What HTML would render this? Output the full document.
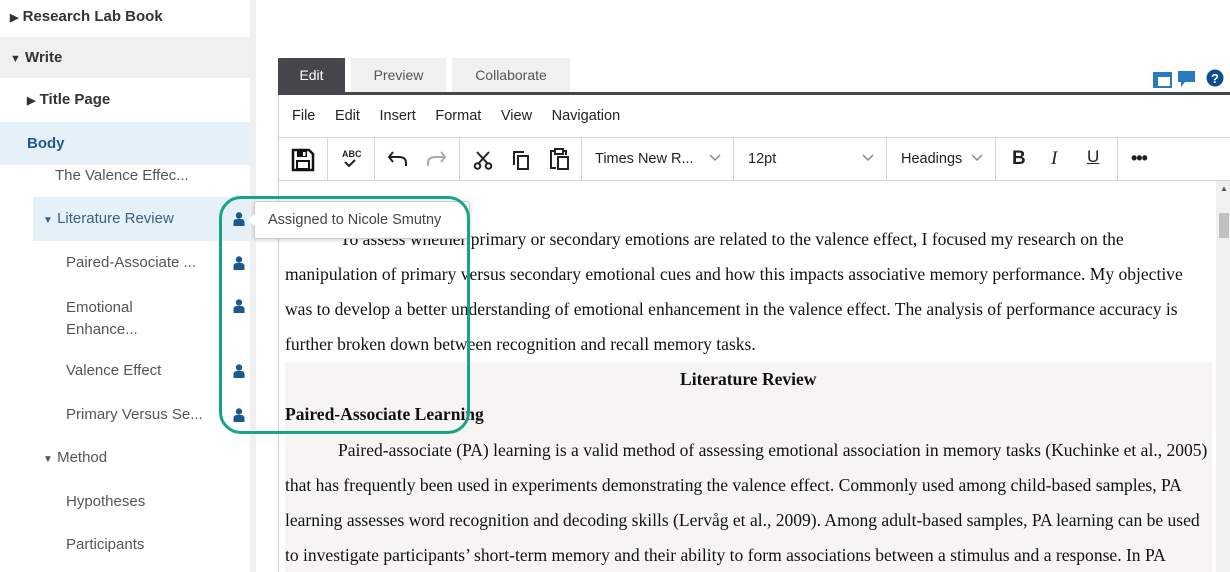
<!DOCTYPE html>
<html><head><meta charset="utf-8"><style>
*{margin:0;padding:0;box-sizing:border-box}
body{width:1230px;height:572px;overflow:hidden;background:#fff;font-family:"Liberation Sans",sans-serif;position:relative}
.a{position:absolute;white-space:nowrap}
.side{position:absolute;left:0;top:0;width:250px;height:572px;background:#fff}
.gut{position:absolute;left:250px;top:0;width:6px;height:572px;background:#efefef}
.nav{color:#555;font-size:15px}
.b{font-weight:bold;color:#333;font-size:15px}
.ser{font-family:"Liberation Serif",serif;font-size:17.55px;color:#111;position:absolute;white-space:nowrap}
.tb{position:absolute;top:138px;height:43px;border-left:1px solid #d6d6d6}
</style></head><body>
<div class="side"></div>
<div class="gut"></div>
<div class="a" style="left:0;top:37px;width:250px;height:41px;background:#f0f0f0"></div>
<div class="a" style="left:0;top:122px;width:250px;height:43px;background:#e6f0f9"></div>
<div class="a" style="left:33px;top:197px;width:217px;height:44px;background:#e6f0f9"></div>

<div class="a b" style="left:10px;top:8px"><span style="font-size:11px">&#9654;</span> Research Lab Book</div>
<div class="a b" style="left:10px;top:49px"><span style="font-size:11px">&#9660;</span> Write</div>
<div class="a b" style="left:27px;top:91px"><span style="font-size:11px">&#9654;</span> Title Page</div>
<div class="a" style="left:27px;top:135px;font-weight:bold;color:#1c5a8e;font-size:15px">Body</div>
<div class="a nav" style="left:55px;top:167px">The Valence Effec...</div>
<div class="a nav" style="left:43px;top:210px;color:#3d5f80"><span style="font-size:10px">&#9660;</span> Literature Review</div>
<div class="a nav" style="left:66px;top:254px">Paired-Associate ...</div>
<div class="a nav" style="left:66px;top:297px;line-height:22px">Emotional<br>Enhance...</div>
<div class="a nav" style="left:66px;top:362px">Valence Effect</div>
<div class="a nav" style="left:66px;top:406px">Primary Versus Se...</div>
<div class="a nav" style="left:43px;top:449px"><span style="font-size:10px">&#9660;</span> Method</div>
<div class="a nav" style="left:66px;top:493px">Hypotheses</div>
<div class="a nav" style="left:66px;top:536px">Participants</div>

<svg class="a" style="left:233px;top:212px" width="12" height="14" viewBox="0 0 12 14"><circle cx="6" cy="3.5" r="3.2" fill="#1c5a8e"/><path d="M0.5 14 V10 Q0.5 7 4 7 H8 Q11.5 7 11.5 10 V14Z" fill="#1c5a8e"/></svg>
<svg class="a" style="left:233px;top:256px" width="12" height="14" viewBox="0 0 12 14"><circle cx="6" cy="3.5" r="3.2" fill="#1c5a8e"/><path d="M0.5 14 V10 Q0.5 7 4 7 H8 Q11.5 7 11.5 10 V14Z" fill="#1c5a8e"/></svg>
<svg class="a" style="left:233px;top:299px" width="12" height="14" viewBox="0 0 12 14"><circle cx="6" cy="3.5" r="3.2" fill="#1c5a8e"/><path d="M0.5 14 V10 Q0.5 7 4 7 H8 Q11.5 7 11.5 10 V14Z" fill="#1c5a8e"/></svg>
<svg class="a" style="left:233px;top:364px" width="12" height="14" viewBox="0 0 12 14"><circle cx="6" cy="3.5" r="3.2" fill="#1c5a8e"/><path d="M0.5 14 V10 Q0.5 7 4 7 H8 Q11.5 7 11.5 10 V14Z" fill="#1c5a8e"/></svg>
<svg class="a" style="left:233px;top:408px" width="12" height="14" viewBox="0 0 12 14"><circle cx="6" cy="3.5" r="3.2" fill="#1c5a8e"/><path d="M0.5 14 V10 Q0.5 7 4 7 H8 Q11.5 7 11.5 10 V14Z" fill="#1c5a8e"/></svg>

<!-- tabs -->
<div class="a" style="left:278px;top:58px;width:67px;height:35px;background:#45474c;color:#fff;font-size:14px;text-align:center;line-height:34px">Edit</div>
<div class="a" style="left:351px;top:58px;width:95px;height:35px;background:#f0f0f0;color:#555;font-size:14px;text-align:center;line-height:34px">Preview</div>
<div class="a" style="left:452px;top:58px;width:118px;height:35px;background:#f0f0f0;color:#555;font-size:14px;text-align:center;line-height:34px">Collaborate</div>
<div class="a" style="left:278px;top:92px;width:952px;height:3px;background:#45474c"></div>
<svg class="a" style="left:1153px;top:72px" width="20" height="16"><rect x="1" y="1" width="17" height="14" fill="none" stroke="#2a7ac0" stroke-width="2"/><rect x="1" y="1" width="17" height="4" fill="#2a7ac0"/><rect x="1" y="5" width="4" height="10" fill="#2a7ac0"/></svg>
<svg class="a" style="left:1177px;top:70px" width="20" height="18"><path d="M1 1H18V12H8L4 17V12H1Z" fill="#2a7ac0"/></svg>
<svg class="a" style="left:1206px;top:69px" width="18" height="18"><circle cx="9" cy="9" r="8.5" fill="#0d4f8b"/><text x="9" y="14" text-anchor="middle" font-size="13" font-weight="bold" fill="#fff" font-family="Liberation Sans">?</text></svg>

<!-- editor frame -->
<div class="a" style="left:278px;top:95px;width:1px;height:477px;background:#cfcfcf"></div>
<div class="a" style="left:292px;top:108px;font-size:14.5px;color:#222;word-spacing:2.5px">File&nbsp;&nbsp; Edit&nbsp;&nbsp; Insert&nbsp;&nbsp; Format&nbsp;&nbsp; View&nbsp;&nbsp; Navigation</div>
<div class="a" style="left:278px;top:137px;width:952px;height:1px;background:#d6d6d6"></div>
<div class="a" style="left:278px;top:180px;width:952px;height:1px;background:#d6d6d6"></div>
<div class="tb" style="left:327px"></div><div class="tb" style="left:374px"></div><div class="tb" style="left:459px"></div><div class="tb" style="left:581px"></div><div class="tb" style="left:733px"></div><div class="tb" style="left:886px"></div><div class="tb" style="left:995px"></div><div class="tb" style="left:1117px"></div>
<svg class="a" style="left:291px;top:148px" width="24" height="24" viewBox="0 0 24 24"><path d="M2 2H18L22 6V22H2Z" fill="none" stroke="#111" stroke-width="2.5"/><rect x="6" y="3" width="10" height="6" fill="#111"/><rect x="12" y="4" width="2.5" height="4" fill="#fff"/><rect x="6" y="13" width="12" height="8" fill="none" stroke="#111" stroke-width="2"/></svg>
<div class="a" style="left:342px;top:149px;font-size:9px;font-weight:bold;color:#222">ABC</div>
<svg class="a" style="left:343px;top:159px" width="14" height="9"><path d="M2 3L6 7L12 1" fill="none" stroke="#222" stroke-width="2"/></svg>
<svg class="a" style="left:387px;top:149px" width="22" height="20"><path d="M6 3L2 8L6 13M2 8H12Q19 8 19 14V17" fill="none" stroke="#222" stroke-width="2"/></svg>
<svg class="a" style="left:426px;top:149px" width="22" height="20"><path d="M15 3L19 8L15 13M19 8H9Q2 8 2 14V17" fill="none" stroke="#aaa" stroke-width="2"/></svg>
<svg class="a" style="left:473px;top:150px" width="20" height="20"><path d="M4 2L15 14M16 2L5 14" stroke="#222" stroke-width="2"/><circle cx="4.5" cy="16" r="2.8" fill="none" stroke="#222" stroke-width="2"/><circle cx="15.5" cy="16" r="2.8" fill="none" stroke="#222" stroke-width="2"/></svg>
<svg class="a" style="left:511px;top:149px" width="20" height="22"><path d="M3 16V3H13" fill="none" stroke="#222" stroke-width="2"/><rect x="7" y="7" width="10" height="13" fill="none" stroke="#222" stroke-width="2"/></svg>
<svg class="a" style="left:548px;top:147px" width="22" height="24"><path d="M7 4H3V21H8M15 4H18V8" fill="none" stroke="#222" stroke-width="2"/><rect x="7" y="2" width="8" height="5" fill="none" stroke="#222" stroke-width="2"/><rect x="10" y="10" width="10" height="12" fill="none" stroke="#222" stroke-width="2"/></svg>
<div class="a" style="left:595px;top:151px;font-size:14.5px;color:#222">Times New R...</div>
<div class="a" style="left:748px;top:151px;font-size:14.5px;color:#222">12pt</div>
<div class="a" style="left:901px;top:151px;font-size:14.5px;color:#222">Headings</div>
<svg class="a" style="left:709px;top:154px" width="12" height="8"><path d="M1 1L6 6L11 1" fill="none" stroke="#888" stroke-width="1.5"/></svg>
<svg class="a" style="left:862px;top:154px" width="12" height="8"><path d="M1 1L6 6L11 1" fill="none" stroke="#888" stroke-width="1.5"/></svg>
<svg class="a" style="left:971px;top:154px" width="12" height="8"><path d="M1 1L6 6L11 1" fill="none" stroke="#888" stroke-width="1.5"/></svg>
<div class="a" style="left:1012px;top:148px;font-size:19px;font-weight:bold;color:#222">B</div>
<div class="a" style="left:1051px;top:148px;font-size:19px;font-style:italic;font-family:'Liberation Serif',serif;color:#222">I</div>
<div class="a" style="left:1087px;top:147px;font-size:17px;color:#222;text-decoration:underline">U</div>
<div class="a" style="left:1131px;top:148px;font-size:18px;font-weight:bold;color:#222;letter-spacing:-1px">•••</div>

<!-- content -->
<div class="a" style="left:285px;top:362px;width:927px;height:210px;background:#f6f5f4"></div>
<div class="a" style="left:1216px;top:181px;width:14px;height:391px;background:#f0f0f0"></div>
<div class="a" style="left:1219px;top:213px;width:10px;height:25px;background:#c1c1c1"></div>
<div class="a" style="left:1220px;top:184px;font-size:8px;color:#555">▲</div>
<div class="ser" style="left:340px;top:229px">To assess whether primary or secondary emotions are related to the valence effect, I focused my research on the</div>
<div class="ser" style="left:285px;top:264px">manipulation of primary versus secondary emotional cues and how this impacts associative memory performance. My objective</div>
<div class="ser" style="left:285px;top:299px">was to develop a better understanding of emotional enhancement in the valence effect. The analysis of performance accuracy is</div>
<div class="ser" style="left:285px;top:334px">further broken down between recognition and recall memory tasks.</div>
<div class="ser" style="left:680px;top:369px;font-weight:bold">Literature Review</div>
<div class="ser" style="left:285px;top:404px;font-weight:bold">Paired-Associate Learning</div>
<div class="ser" style="left:338px;top:440px">Paired-associate (PA) learning is a valid method of assessing emotional association in memory tasks (Kuchinke et al., 2005)</div>
<div class="ser" style="left:285px;top:475px">that has frequently been used in experiments demonstrating the valence effect. Commonly used among child-based samples, PA</div>
<div class="ser" style="left:285px;top:510px">learning assesses word recognition and decoding skills (Lervåg et al., 2009). Among adult-based samples, PA learning can be used</div>
<div class="ser" style="left:285px;top:545px">to investigate participants’ short-term memory and their ability to form associations between a stimulus and a response. In PA</div>

<!-- tooltip -->
<div class="a" style="left:254px;top:201px;width:216px;height:38px;background:#fff;border:1px solid #ccc;border-radius:3px;box-shadow:0 1px 4px rgba(0,0,0,.2);font-size:14.5px;color:#444;line-height:37px;padding-left:13px">Assigned to Nicole Smutny</div>
<div class="a" style="left:248px;top:214px;width:0;height:0;border-top:6px solid transparent;border-bottom:6px solid transparent;border-right:7px solid #fff"></div>
<div class="a" style="left:219px;top:196px;width:251px;height:238px;border:3px solid #17a386;border-radius:22px"></div>
</body></html>
